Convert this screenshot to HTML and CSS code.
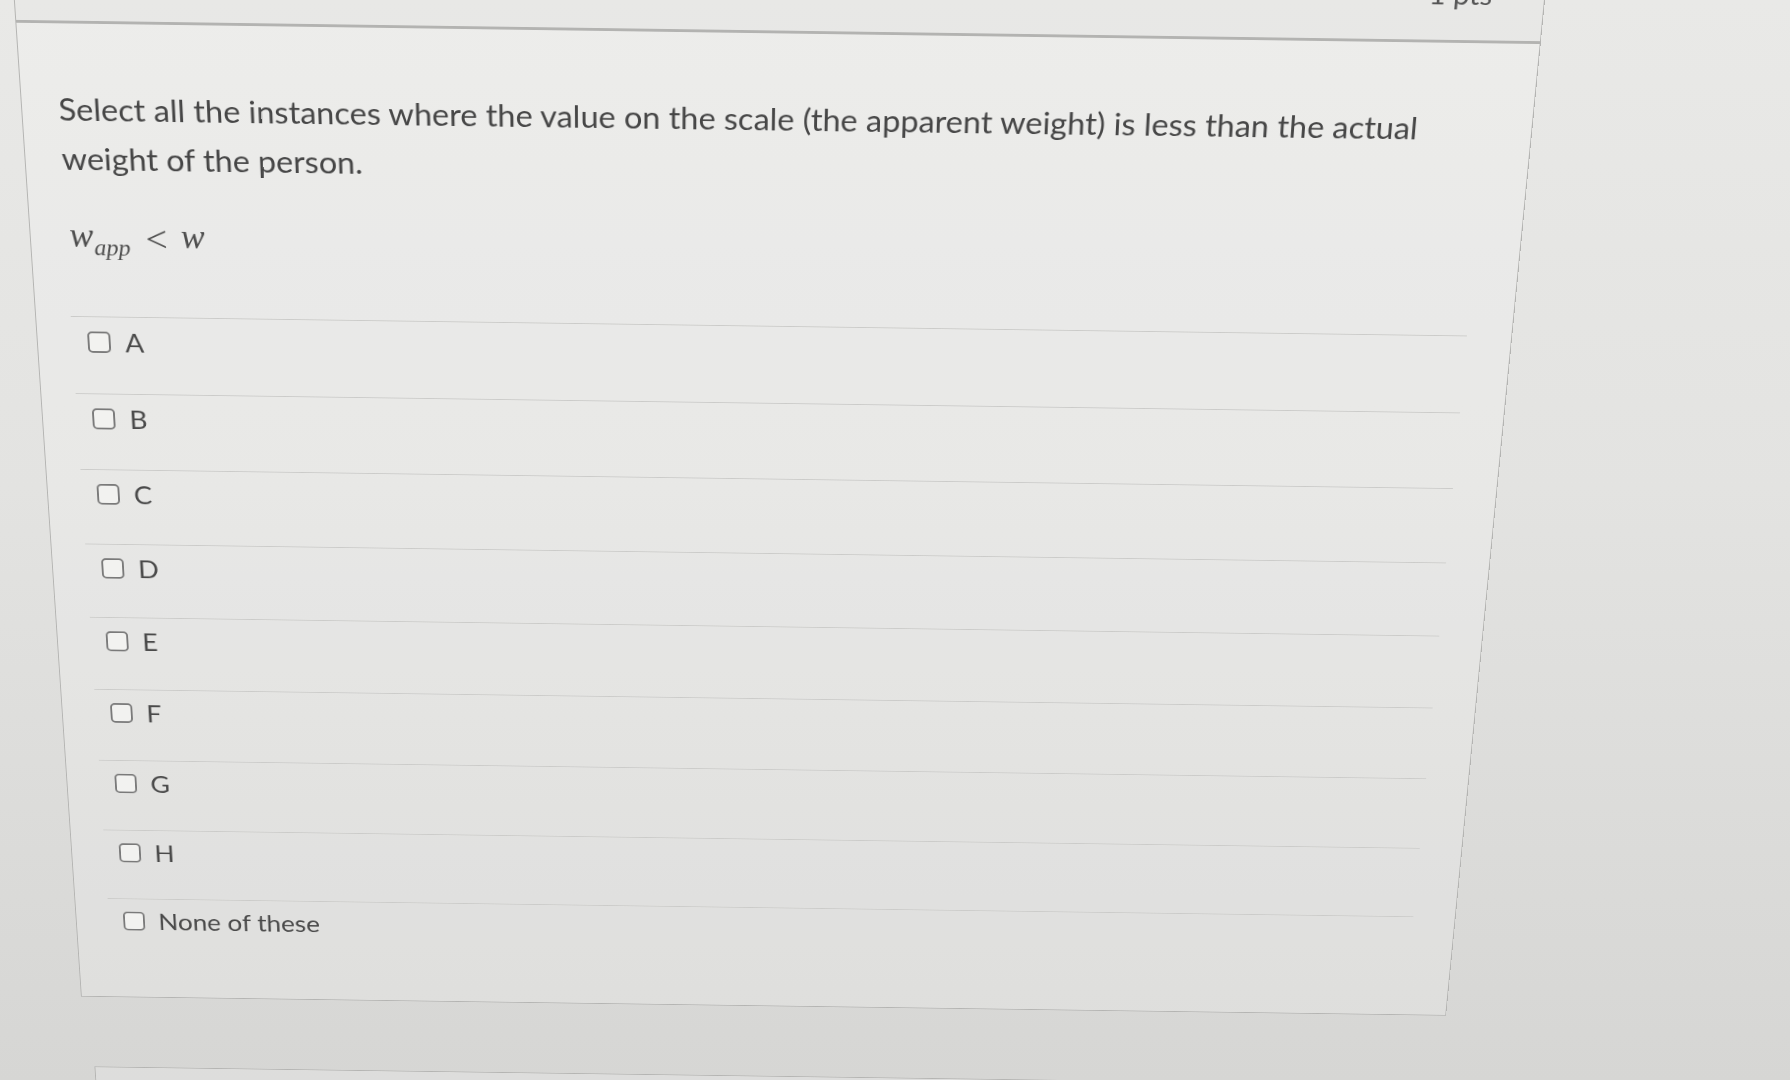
FILE: index.html
```html
<!DOCTYPE html>
<html lang="en">
<head>
    <meta charset="UTF-8">
    <meta name="viewport" content="width=device-width, initial-scale=1.0">
    <title>Quiz Question</title>
    <link rel="stylesheet" href="styles.css">
</head>
<body>

    <div class="page">
        <!-- Question card -->
        <div class="question">
            <div class="question-header">
                <span class="points">1 pts</span>
            </div>

            <div class="question-body">
                <p class="question-text">Select all the instances where the value on the scale (the apparent weight) is less than the actual weight of the person.</p>

                <p class="formula"><i>w</i><sub><i>app</i></sub><span class="op">&lt;</span><i>w</i></p>

                <div class="answers">
                    <label class="answer"><input type="checkbox"> <span>A</span></label>
                    <label class="answer"><input type="checkbox"> <span>B</span></label>
                    <label class="answer"><input type="checkbox"> <span>C</span></label>
                    <label class="answer"><input type="checkbox"> <span>D</span></label>
                    <label class="answer"><input type="checkbox"> <span>E</span></label>
                    <label class="answer"><input type="checkbox"> <span>F</span></label>
                    <label class="answer"><input type="checkbox"> <span>G</span></label>
                    <label class="answer"><input type="checkbox"> <span>H</span></label>
                    <label class="answer"><input type="checkbox"> <span>None of these</span></label>
                </div>
            </div>
        </div>

        <!-- Next question, only its top edge fits -->
        <div class="question next"></div>
    </div>

</body>
</html>
```

FILE: styles.css
```css
html, body {
    height: 100%;
}

body {
    margin: 0;
    overflow: hidden;
    font-family: Lato, "Open Sans", Arial, sans-serif;
    color: #464646;
    background: linear-gradient(180deg, #e9e9e7 0%, #e3e3e1 45%, #d6d6d4 100%);
}

/* the screen is seen a little tilted, so the whole page leans back */
.page {
    padding-left: 11px;
    transform-origin: 770px 0;
    transform: rotate(0.8deg) perspective(2500px) rotateX(-15deg);
}

.question {
    width: 1534px;
    margin-top: -31px;
    border: 1px solid #b4b4b2;
    background-color: rgba(255, 255, 255, 0.18);
}

.question-header {
    display: flex;
    justify-content: flex-end;
    height: 63px;
    padding-right: 52px;
    border-bottom: 3px solid #b3b3b1;
    background-color: rgba(0, 0, 0, 0.02);
}

.points {
    font-size: 29px;
    line-height: 30px;
    color: #555;
}

.question-body {
    padding: 64px 0 40px 46px;
}

.question-text {
    margin: 0 0 0 -9px;
    max-width: 1465px;
    font-size: 33px;
    line-height: 53px;
}

.formula {
    margin: 31px 0 0 -6px;
    font-family: "Liberation Serif", "DejaVu Serif", serif;
    font-size: 37px;
    line-height: 53px;
    color: #4e4e4e;
}

.formula sub {
    font-size: 25px;
    vertical-align: -9px;
    line-height: 0;
}

.formula .op {
    margin: 0 14px 0 16px;
    font-size: 40px;
    font-weight: 300;
    vertical-align: -4px;
    line-height: 0;
}

.answers {
    margin: 63px 46px 0 -10px;
}

.answer {
    display: flex;
    align-items: center;
    height: 31px;
    padding: 12px 0 43px 16px;
    border-top: 1px solid #cbcbc9;
    font-size: 29px;
    color: #4a4a4a;
}

.answer input {
    appearance: none;
    width: 24px;
    height: 24px;
    margin: 0 15px 0 0;
    border: 2px solid #7a7a7a;
    border-radius: 5px;
    background-color: #f2f2f0;
}

.question.next {
    height: 300px;
    margin: 92px 0 0 10px;
    width: 1520px;
}
```
